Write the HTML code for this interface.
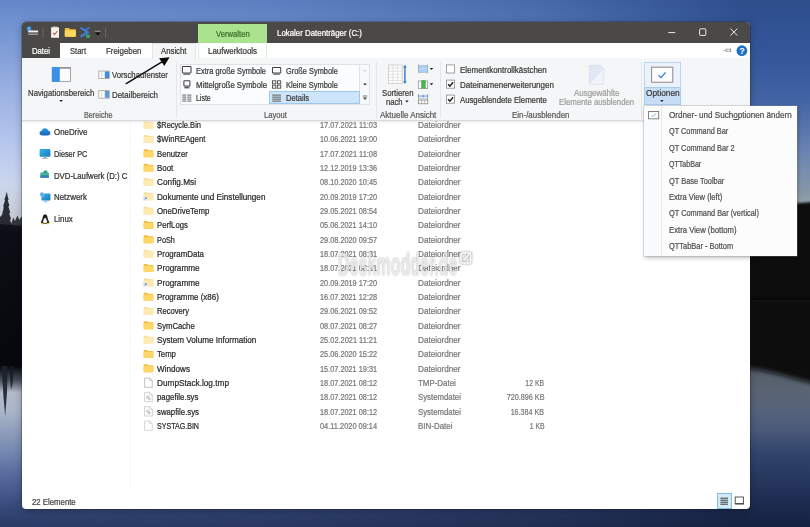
<!DOCTYPE html>
<html lang="de">
<head>
<meta charset="utf-8">
<title>Lokaler Datenträger (C:)</title>
<style>
html,body{margin:0;padding:0;width:810px;height:527px;overflow:hidden;background:#1a2644}
body{position:relative;font-family:"Liberation Sans",sans-serif;font-size:7.8px;color:#2a2a2a;-webkit-font-smoothing:antialiased}
svg{position:absolute;left:0;top:0;display:block}
#bg{width:810px;height:527px}
#ico{width:810px;height:527px;pointer-events:none}
.abs{position:absolute;box-sizing:border-box}
#win{left:22px;top:22px;width:728px;height:487px;background:#fff;border-radius:4px;overflow:hidden;box-shadow:0 0 0 0.6px rgba(30,30,40,.45),0 2px 8px rgba(0,0,0,.28)}
#titlebar{left:0;top:0;width:728px;height:20.8px;background:#4b4947}
#ctx{left:176px;top:2.1px;width:69.4px;height:18.7px;background:#abe28d}
#tabrow{left:0;top:20.8px;width:728px;height:15.5px;background:#fff}
#filetab{left:0;top:20.8px;width:38px;height:15.5px;background:#4b4947}
#viewtab{left:129.5px;top:21.4px;width:44.6px;height:15.4px;background:#f5f6f7;border:0.7px solid #e4e5e7;border-bottom:none}
#ctxtab{left:176px;top:20.8px;width:69.4px;height:15.5px;background:#fdfffc;border-left:0.7px solid #e3e8e0;border-right:0.7px solid #e3e8e0}
#ribbon{left:0;top:36.3px;width:728px;height:63px;background:#f5f6f7;border-bottom:0.8px solid #d9dadc;box-shadow:0 1px 2px rgba(0,0,0,.10)}
.gsep{top:40px;width:0.7px;height:56px;background:#e6e7e9}
#gallery{left:157.6px;top:42.2px;width:180px;height:40.4px;background:#fbfcfd;border:0.7px solid #dfe2e6}
#galscroll{left:337.6px;top:42.2px;width:10px;height:40.4px;background:#f8f9fa;border:0.7px solid #dfe2e6;border-left:none}
#galsel{left:247.2px;top:69.3px;width:90.4px;height:13.2px;background:#cde4fb;border:0.7px solid #9cc7ee}
#optbtn{left:622.4px;top:40.4px;width:37px;height:43px;background:#eaf2fb;border:0.7px solid #bcd6f1}
#optbtn2{left:622.4px;top:64.9px;width:37px;height:18.5px;background:#c7def6;border:0.7px solid #a9cbee}
#navsep{left:107.6px;top:100px;width:0.6px;height:366px;background:#f7f7f8}
#statusview{left:694.7px;top:471.3px;width:15px;height:15.7px;background:#d3e9f5;border:0.8px solid #82c0e0}
#menu{left:644.4px;top:105.6px;width:152.6px;height:150px;background:#fcfcfd;box-shadow:0 0 0 0.6px rgba(140,140,150,.45),1px 2px 4px rgba(0,0,0,.25)}
#menucol{left:0;top:0;width:18px;height:150px;background:#fafbfc;border-right:0.6px solid #ececee}
#wm{left:338.3px;top:246.4px;height:36px;line-height:36px;font-weight:bold;font-size:32px;color:rgba(255,255,255,.74);text-shadow:0 0 1.6px rgba(0,0,0,.3),0 0 3.5px rgba(0,0,0,.13);white-space:nowrap;transform-origin:0 50%;transform:scaleX(0.5015);will-change:transform}
#txt{position:absolute;left:0;top:0;width:810px;height:527px;will-change:transform;transform:translateZ(0)}
#wmi{width:810px;height:527px;pointer-events:none}

.t{position:absolute;white-space:nowrap;line-height:12px;height:12px;font-size:8.15px;transform-origin:0 50%;-webkit-text-stroke:0.22px currentColor}
.t u{text-decoration:underline;text-underline-offset:1px}
</style>
</head>
<body>
<svg id="bg" viewBox="0 0 810 527" width="810" height="527">
<defs>
<linearGradient id="gL" x1="0" y1="0" x2="0" y2="527" gradientUnits="userSpaceOnUse">
<stop offset="0" stop-color="#6387c9"/>
<stop offset="0.042" stop-color="#6f91d0"/>
<stop offset="0.19" stop-color="#a0b5e4"/>
<stop offset="0.285" stop-color="#bac9ee"/>
<stop offset="0.35" stop-color="#cbd6ec"/>
<stop offset="0.385" stop-color="#c9d0df"/>
<stop offset="0.425" stop-color="#c2c6ce"/>
<stop offset="0.437" stop-color="#3a3e46"/>
<stop offset="0.447" stop-color="#0b0e14"/>
<stop offset="0.695" stop-color="#06080d"/>
<stop offset="0.722" stop-color="#4a525e"/>
<stop offset="0.745" stop-color="#b2bbc9"/>
<stop offset="0.78" stop-color="#aab5c8"/>
<stop offset="0.82" stop-color="#8e9dbb"/>
<stop offset="0.86" stop-color="#7286b0"/>
<stop offset="0.90" stop-color="#576c9c"/>
<stop offset="0.94" stop-color="#42568a"/>
<stop offset="0.966" stop-color="#344776"/>
<stop offset="1" stop-color="#2b3b66"/>
</linearGradient>
<linearGradient id="gR" x1="0" y1="0" x2="0" y2="527" gradientUnits="userSpaceOnUse">
<stop offset="0" stop-color="#2d4d8b"/>
<stop offset="0.10" stop-color="#34569a"/>
<stop offset="0.19" stop-color="#4263a4"/>
<stop offset="0.285" stop-color="#6983b3"/>
<stop offset="0.33" stop-color="#798fae"/>
<stop offset="0.36" stop-color="#8395a7"/>
<stop offset="0.39" stop-color="#98a2ab"/>
<stop offset="0.69" stop-color="#515963"/>
<stop offset="0.74" stop-color="#5a6473"/>
<stop offset="0.78" stop-color="#55627a"/>
<stop offset="0.815" stop-color="#4a5a79"/>
<stop offset="0.86" stop-color="#32446b"/>
<stop offset="0.95" stop-color="#1d2c52"/>
<stop offset="1" stop-color="#15213f"/>
</linearGradient>
<linearGradient id="gMask" x1="0" y1="0" x2="810" y2="0" gradientUnits="userSpaceOnUse">
<stop offset="0" stop-color="#fff" stop-opacity="0"/>
<stop offset="0.03" stop-color="#fff" stop-opacity="0"/>
<stop offset="0.33" stop-color="#fff" stop-opacity="0.14"/>
<stop offset="0.66" stop-color="#fff" stop-opacity="0.5"/>
<stop offset="0.92" stop-color="#fff" stop-opacity="1"/>
<stop offset="1" stop-color="#fff" stop-opacity="1"/>
</linearGradient>
<mask id="mR" maskUnits="userSpaceOnUse" x="0" y="0" width="810" height="527"><rect x="0" y="0" width="810" height="527" fill="url(#gMask)"/></mask>
<filter id="fb" x="-5%" y="-5%" width="110%" height="110%"><feGaussianBlur stdDeviation="0.9"/></filter>
<filter id="fb2" x="-5%" y="-20%" width="110%" height="140%"><feGaussianBlur stdDeviation="2.4"/></filter>
</defs>
<rect x="0" y="0" width="810" height="527" fill="url(#gL)"/>
<path d="M6.8 191.6 L7.6 196 L8.6 199.6 L7.8 200.4 L9.4 205.6 L8.4 206.4 L10.2 212.6 L9.2 213.4 L11 219 L10 219.8 L12 226 L12 234 L0 234 L0 217 L2 215 L3.8 207 L3.2 206.2 L5 200.6 L4.4 199.8 L5.8 195.6 Z" fill="#0e1117" opacity="0.86"/>
<path d="M11 224 L13.4 217.4 L15 221 L17.4 215.6 L19.4 220 L21.4 216.6 L24 221 L24 234 L11 234 Z" fill="#10131a" opacity="0.8"/>
<path d="M0 224 L24 226 L24 236 L0 236 Z" fill="#0b0e14" opacity="0.75"/>
<path d="M1.6 366 L7.6 366 L7 392 L5.2 416 L3.4 396 Z" fill="#1c222c" opacity="0.9"/>
<path d="M9 366 L14 366 L12.6 384 L11 390 Z" fill="#161b24" opacity="0.75"/>
<g mask="url(#mR)">
<rect x="0" y="0" width="810" height="527" fill="url(#gR)"/>
<path filter="url(#fb)" d="M380 206 L740 203.6 L797 203.3 L820 201.4 L820 330 L380 330 Z" fill="#080a10"/>
<path filter="url(#fb2)" d="M380 300 L820 300 L820 385 L810 382.6 L796 379 L780 374.6 L765 371 L750 368.6 L380 366 Z" fill="#080a10"/>
</g>
</svg>

<div id="win" class="abs">
<div id="titlebar" class="abs"></div>
<div id="ctx" class="abs"></div>
<div id="tabrow" class="abs"></div>
<div id="filetab" class="abs"></div>
<div id="ctxtab" class="abs"></div>
<div id="ribbon" class="abs"></div>
<div id="viewtab" class="abs"></div>
<div class="abs gsep" style="left:153.6px"></div>
<div class="abs gsep" style="left:354.3px"></div>
<div class="abs gsep" style="left:418.4px"></div>
<div class="abs gsep" style="left:619px"></div>
<div id="gallery" class="abs"></div>
<div id="galscroll" class="abs"></div>
<div id="galsel" class="abs"></div>
<div id="optbtn" class="abs"></div>
<div id="optbtn2" class="abs"></div>
<div id="navsep" class="abs"></div>
<div id="statusview" class="abs"></div>
</div>
<div id="menu" class="abs"><div id="menucol" class="abs"></div></div>

<svg id="ico" viewBox="0 0 810 527" width="810" height="527">
<defs>
<linearGradient id="gMon" x1="0" y1="0" x2="1" y2="1"><stop offset="0" stop-color="#35b4ea"/><stop offset="1" stop-color="#1a78bc"/></linearGradient>
<linearGradient id="gCloud" x1="0" y1="0" x2="0" y2="1"><stop offset="0" stop-color="#2a95e6"/><stop offset="1" stop-color="#1268c0"/></linearGradient>
<g id="folder">
<path d="M0.3 1.6 Q0.3 0.9 1 0.9 L3.9 0.9 L5 2 L9.9 2 Q10.5 2 10.5 2.7 L10.5 9 Q10.5 9.6 9.9 9.6 L0.9 9.6 Q0.3 9.6 0.3 9 Z" fill="#f3bb39"/>
<path d="M0.3 3.4 Q0.3 2.9 0.9 2.9 L9.9 2.9 Q10.5 2.9 10.5 3.4 L10.5 9 Q10.5 9.6 9.9 9.6 L0.9 9.6 Q0.3 9.6 0.3 9 Z" fill="#ffd766"/>
</g>
<g id="i-f"><use href="#folder"/></g>
<g id="i-ff" opacity="0.5"><use href="#folder"/></g>
<g id="i-fs"><g opacity="0.5"><use href="#folder"/></g><rect x="0" y="6.2" width="3.6" height="3.6" fill="#fff" stroke="#c9d3e6" stroke-width="0.4"/><path d="M0.9 9 L2.8 7.1 M1.5 7 L2.9 7 L2.9 8.4" stroke="#2f66c8" stroke-width="0.8" fill="none"/></g>
<g id="page"><path d="M1.2 0.2 L6.6 0.2 L9.4 3 L9.4 10.6 L1.2 10.6 Z" fill="#fdfdfd" stroke="#a9a9a9" stroke-width="0.7"/><path d="M6.6 0.2 L6.6 3 L9.4 3" fill="none" stroke="#a9a9a9" stroke-width="0.6"/></g>
<g id="i-p"><use href="#page"/></g>
<g id="i-pf" opacity="0.7"><use href="#page"/></g>
<g id="i-s" opacity="0.75"><use href="#page"/><circle cx="4.6" cy="5.4" r="1.4" fill="#d9d9d9" stroke="#9a9a9a" stroke-width="0.7"/><circle cx="6.3" cy="7.5" r="1.1" fill="#d9d9d9" stroke="#9a9a9a" stroke-width="0.6"/></g>
<path id="dd" d="M-1.8 -1 L1.8 -1 L0 1 Z" fill="#222"/>
<g id="cb"><rect x="0.4" y="0.4" width="8.1" height="8.1" fill="#fff" stroke="#8c8c8c" stroke-width="0.8"/></g>
<g id="cbc"><use href="#cb"/><path d="M2 4.6 L3.8 6.4 L7 2.6" fill="none" stroke="#1c1c1c" stroke-width="1.4"/></g>
<g id="mon"><rect x="0.5" y="0.5" width="8.6" height="6.4" rx="0.6" fill="#fdfdfd" stroke="#404040" stroke-width="1.05"/><rect x="1.4" y="7.5" width="6.8" height="1.3" fill="#5a5a5a"/></g>
<g id="monS"><rect x="0.5" y="0.5" width="6" height="5.2" rx="0.5" fill="#fdfdfd" stroke="#404040" stroke-width="1.05"/><rect x="1" y="6.5" width="5" height="1.7" fill="#5a5a5a"/></g>
</defs>

<!-- file list icons -->
<clipPath id="cpRows"><rect x="130" y="121.6" width="40" height="320"/></clipPath>
<g clip-path="url(#cpRows)">
<use href="#i-ff" transform="translate(143.4,119.90) scale(0.95,0.9)"/>
<use href="#i-ff" transform="translate(143.4,134.23) scale(0.95,0.9)"/>
<use href="#i-f" transform="translate(143.4,148.56) scale(0.95,0.9)"/>
<use href="#i-f" transform="translate(143.4,162.89) scale(0.95,0.9)"/>
<use href="#i-ff" transform="translate(143.4,177.22) scale(0.95,0.9)"/>
<use href="#i-fs" transform="translate(143.4,191.55) scale(0.95,0.9)"/>
<use href="#i-ff" transform="translate(143.4,205.88) scale(0.95,0.9)"/>
<use href="#i-f" transform="translate(143.4,220.21) scale(0.95,0.9)"/>
<use href="#i-f" transform="translate(143.4,234.54) scale(0.95,0.9)"/>
<use href="#i-ff" transform="translate(143.4,248.87) scale(0.95,0.9)"/>
<use href="#i-f" transform="translate(143.4,263.20) scale(0.95,0.9)"/>
<use href="#i-fs" transform="translate(143.4,277.53) scale(0.95,0.9)"/>
<use href="#i-f" transform="translate(143.4,291.86) scale(0.95,0.9)"/>
<use href="#i-ff" transform="translate(143.4,306.19) scale(0.95,0.9)"/>
<use href="#i-f" transform="translate(143.4,320.52) scale(0.95,0.9)"/>
<use href="#i-ff" transform="translate(143.4,334.85) scale(0.95,0.9)"/>
<use href="#i-f" transform="translate(143.4,349.18) scale(0.95,0.9)"/>
<use href="#i-f" transform="translate(143.4,363.51) scale(0.95,0.9)"/>
<use href="#i-p" transform="translate(143.4,377.84) scale(0.95,0.9)"/>
<use href="#i-s" transform="translate(143.4,392.17) scale(0.95,0.9)"/>
<use href="#i-s" transform="translate(143.4,406.50) scale(0.95,0.9)"/>
<use href="#i-pf" transform="translate(143.4,420.83) scale(0.95,0.9)"/>
</g>

<!-- quick access toolbar -->
<g>
<rect x="27" y="26.6" width="4.2" height="4.4" fill="#2f8ad8"/>
<rect x="28.3" y="27.4" width="1.4" height="1.6" fill="#9fd0f5"/>
<rect x="28.2" y="30.5" width="9.9" height="1.9" fill="#f2f2f2"/>
<rect x="28.2" y="33.7" width="9.9" height="1" fill="#bdbcbb"/>
<rect x="42.6" y="27.6" width="0.8" height="9.8" fill="#716f6d"/>
<rect x="51.1" y="27.2" width="7.9" height="10.6" rx="0.6" fill="#f6f2ec"/>
<rect x="52.6" y="26.6" width="4.8" height="1.6" fill="#dcd6cd"/>
<path d="M53 32.8 L54.6 34.6 L57.4 31" fill="none" stroke="#c45a4c" stroke-width="1.1"/>
<path d="M64.8 29 Q64.8 28.1 65.6 28.1 L69 28.1 L70.1 29.3 L75.2 29.3 Q75.9 29.3 75.9 30 L75.9 36 Q75.9 36.7 75.2 36.7 L65.5 36.7 Q64.8 36.7 64.8 36 Z" fill="#f0bf3a"/>
<path d="M64.8 30.6 L75.9 30.6 L75.9 36 Q75.9 36.7 75.2 36.7 L65.5 36.7 Q64.8 36.7 64.8 36 Z" fill="#fbd75c"/>
<path d="M80.6 27.6 L87.6 32.2 L80.6 36.6" fill="none" stroke="#3f7fdb" stroke-width="2.2"/>
<path d="M84 30.4 L89.6 27.6" fill="none" stroke="#3f7fdb" stroke-width="1.6"/>
<rect x="86" y="34.2" width="4" height="3.8" rx="0.8" fill="#3c9c6e"/>
<rect x="95" y="30.8" width="5.6" height="0.8" fill="#b4b3b2"/>
<path d="M95.2 32.6 L100.4 32.6 L97.8 35.6 Z" fill="#0c0c0c"/>
<rect x="105.3" y="27.6" width="0.8" height="9.8" fill="#716f6d"/>
</g>

<!-- window controls -->
<g stroke="#f4f4f4" fill="none" stroke-width="0.95">
<path d="M668.2 32.6 L675.2 32.6"/>
<rect x="699.6" y="28.8" width="6.2" height="6.6" rx="0.8"/>
<path d="M730.4 28.6 L737.4 35.6 M737.4 28.6 L730.4 35.6"/>
</g>

<!-- pin + help -->
<g>
<path d="M723.4 50.3 L726 50.3 M726.2 48.6 L726.2 52 M726.2 49.2 L730.4 49.2 L730.4 51.4 L726.2 51.4 M730.6 48.3 L730.6 52.3" stroke="#8a8a8a" stroke-width="0.7" fill="none"/>
<circle cx="741.9" cy="50.7" r="5.4" fill="#1a6fc6"/>
<text x="741.9" y="54" text-anchor="middle" font-family="Liberation Sans, sans-serif" font-weight="bold" font-size="9" fill="#fff">?</text>
</g>

<!-- ribbon: panes -->
<g>
<rect x="52.3" y="67.6" width="18.2" height="13.8" fill="#fbfbfb" stroke="#9a9a9a" stroke-width="0.9"/>
<rect x="52.3" y="67.2" width="18.2" height="1.5" fill="#8f8f8f"/>
<rect x="51.9" y="67.2" width="7.9" height="14.6" fill="#3a90e4"/>
<use href="#dd" x="61.1" y="101.1"/>
<rect x="98.8" y="71.1" width="10.4" height="7.4" fill="#fff" stroke="#a8a096" stroke-width="0.8"/>
<rect x="104.8" y="71.5" width="4.4" height="6.6" fill="#3f8edc"/>
<rect x="101.6" y="71.5" width="0.7" height="6.6" fill="#c8c2ba"/>
<rect x="98.8" y="90.6" width="10.4" height="7.6" fill="#fff" stroke="#a8a096" stroke-width="0.8"/>
<rect x="104.8" y="91" width="4.4" height="6.8" fill="#5b9bd8"/>
<rect x="101.6" y="91" width="0.7" height="6.8" fill="#c8c2ba"/>
</g>

<!-- gallery icons -->
<g>
<use href="#mon" x="181.9" y="66"/>
<use href="#monS" x="183.4" y="80.2"/>
<g fill="#7c7c7c">
<rect x="182.2" y="94.5" width="4.1" height="1.2"/><rect x="182.2" y="96.5" width="4.1" height="1.2"/><rect x="182.2" y="98.5" width="4.1" height="1.2"/><rect x="182.2" y="100.5" width="4.1" height="1.2"/>
<rect x="187.3" y="94.5" width="4.1" height="1.2"/><rect x="187.3" y="96.5" width="4.1" height="1.2"/><rect x="187.3" y="98.5" width="4.1" height="1.2"/><rect x="187.3" y="100.5" width="4.1" height="1.2"/>
</g>
<g transform="translate(272,67) scale(0.96,0.88)"><use href="#mon"/></g>
<g fill="#fdfdfd" stroke="#4a4a4a" stroke-width="0.9">
<rect x="272.5" y="80.8" width="3.3" height="3"/><rect x="277.4" y="80.8" width="3.3" height="3"/>
<rect x="272.5" y="85.2" width="3.3" height="3"/><rect x="277.4" y="85.2" width="3.3" height="3"/>
</g>
<g fill="#7c7c7c">
<rect x="272.2" y="94.5" width="8.8" height="1.3"/><rect x="272.2" y="96.5" width="8.8" height="1.3"/><rect x="272.2" y="98.5" width="8.8" height="1.3"/><rect x="272.2" y="100.5" width="8.8" height="1.3"/>
</g>
<rect x="363.6" y="70.4" width="2.6" height="0.8" fill="#b5b5b5"/>
<use href="#dd" x="365" y="84.6"/>
<rect x="362.8" y="95.6" width="4.4" height="0.8" fill="#555"/>
<path d="M362.8 97.4 L367.2 97.4 L365 100 Z" fill="#555"/>
</g>

<!-- current view -->
<g>
<rect x="388.4" y="65" width="13.8" height="18.6" fill="#fefefe" stroke="#c4c4c4" stroke-width="0.7"/>
<path d="M388.4 68.1 H402.2 M388.4 71.2 H402.2 M388.4 74.3 H402.2 M388.4 77.4 H402.2 M388.4 80.5 H402.2 M393 65 V83.6 M397.6 65 V83.6" stroke="#d2d2d2" stroke-width="0.6" fill="none"/>
<path d="M404.9 66.5 V82.2" stroke="#3b82c8" stroke-width="1.5" fill="none"/>
<path d="M403 67.4 L404.9 64.8 L406.8 67.4 Z M403 81.2 L404.9 83.9 L406.8 81.2 Z" fill="#3b82c8"/>
<use href="#dd" x="406.9" y="101.4"/>
<rect x="418.6" y="65.4" width="9" height="7" fill="#a9d1f2" stroke="#9db6cc" stroke-width="0.6"/>
<path d="M418.6 64.4 V73.4 M427.6 64.4 V73.4" stroke="#9aa4ae" stroke-width="0.7"/>
<path d="M418.6 68.9 H427.6" stroke="#d4e8f8" stroke-width="0.6"/>
<use href="#dd" x="431.5" y="69"/>
<rect x="418.3" y="81" width="9.4" height="7.4" fill="#fff" stroke="#8c8c8c" stroke-width="0.7"/>
<rect x="421.6" y="80" width="3.8" height="8.4" fill="#3ec046"/>
<path d="M421.4 81 V88.4 M425.6 81 V88.4" stroke="#6a6a6a" stroke-width="0.5"/>
<use href="#dd" x="431.5" y="84.3"/>
<path d="M418.6 94.2 V98 M427.6 94.2 V98 M419.4 96.1 H426.8" stroke="#3b82c8" stroke-width="0.8" fill="none"/>
<path d="M423.1 94.6 V97.6" stroke="#3b82c8" stroke-width="0.7"/>
<rect x="418.4" y="99" width="9.4" height="4.8" fill="#fff" stroke="#7e7e7e" stroke-width="0.7"/>
<path d="M418.4 100.6 H427.8 M421.5 100.6 V103.8 M424.6 100.6 V103.8" stroke="#8e8e8e" stroke-width="0.6"/>
</g>

<!-- checkboxes -->
<use href="#cb" x="446.1" y="64.5"/>
<use href="#cbc" x="446.1" y="79.7"/>
<use href="#cbc" x="446.1" y="94.7"/>

<!-- hide selected -->
<g>
<path d="M589.4 65.3 L600.6 65.3 L603.9 68.6 L603.9 84.3 L589.4 84.3 Z" fill="#e1e7f5"/>
<path d="M589.4 84.3 L603.9 69 L603.9 84.3 Z" fill="#f0f3fa"/>
<path d="M589.4 65.3 L600.6 65.3 L603.9 68.6 L603.9 84.3 L589.4 84.3 Z" fill="none" stroke="#c3cbe0" stroke-width="0.6" stroke-dasharray="1.2 1"/>
</g>

<!-- options -->
<g>
<rect x="651.6" y="67.2" width="21.2" height="15" fill="#fdfdfd" stroke="#90877f" stroke-width="1"/>
<path d="M658.6 75.2 L661 77.6 L665.6 72.4" fill="none" stroke="#2f7fcc" stroke-width="1.3"/>
<use href="#dd" x="661.9" y="101.1"/>
<rect x="648.5" y="111.5" width="10.2" height="7.3" fill="#fdfdfd" stroke="#777" stroke-width="0.9"/>
<path d="M651.6 115.2 L653 116.6 L655.8 113.6" fill="none" stroke="#6fa8dc" stroke-width="0.9"/>
</g>

<!-- nav pane icons -->
<g>
<path d="M42.3 135.4 Q39.5 135.4 39.5 133 Q39.5 131 41.6 130.7 Q42.4 128.3 45 128.3 Q47.3 128.3 48.2 130.5 Q50.4 130.8 50.4 133 Q50.4 135.4 48 135.4 Z" fill="url(#gCloud)"/>
<rect x="39.6" y="149.1" width="10.8" height="7.6" rx="0.8" fill="url(#gMon)"/>
<rect x="44" y="156.7" width="2" height="1.4" fill="#8fa7b8"/>
<rect x="42.2" y="158" width="5.6" height="0.8" fill="#9db0be"/>
<path d="M40.4 173 Q40.4 172.4 41 172.4 L43 172.4 L44.4 170.4 L47 170.4 L47.6 172.4 L48.2 172.4 Q48.8 172.4 48.8 173 L48.8 177.8 L40.4 177.8 Z" fill="#33a08b"/>
<rect x="40.4" y="175.5" width="8.4" height="2.3" fill="#3b7fc6"/>
<rect x="41.6" y="173.6" width="6" height="0.8" fill="#7fd0b8"/>
<rect x="41.4" y="193.6" width="9" height="6.9" rx="0.7" fill="url(#gMon)"/>
<rect x="40.2" y="192.6" width="3.4" height="3.6" rx="0.5" fill="#3f9fe4" stroke="#d6ecfa" stroke-width="0.5"/>
<rect x="44.8" y="200.5" width="2" height="1.2" fill="#6fb3e2"/>
<rect x="43.4" y="201.6" width="4.8" height="0.7" fill="#8fc4ea"/>
<path d="M45.1 214.2 Q47.2 214.2 47.4 216.8 Q47.6 219 49 221.4 Q49.9 223.2 48.4 223.8 L41.8 223.8 Q40.3 223.2 41.2 221.4 Q42.6 219 42.8 216.8 Q43 214.2 45.1 214.2 Z" fill="#1d1d1d"/>
<path d="M45.1 217.6 Q46.6 219 47.2 221.4 Q47.4 223.2 45.1 223.2 Q42.8 223.2 43 221.4 Q43.6 219 45.1 217.6 Z" fill="#f6f6f2"/>
<path d="M41 223 Q42.4 222.2 43.6 223.2 L43.4 224.2 L41 224.2 Z M49.2 223 Q47.8 222.2 46.6 223.2 L46.8 224.2 L49.2 224.2 Z" fill="#e6c22e"/>
</g>

<!-- status bar view buttons -->
<g>
<path d="M720.4 498.2 H728 M720.4 500.2 H728 M720.4 502.2 H728 M720.4 504.2 H728" stroke="#2c2c2c" stroke-width="0.9"/>
<rect x="735.2" y="497" width="8.2" height="6.8" fill="#fff" stroke="#444" stroke-width="0.9"/>
<rect x="735.2" y="503.2" width="8.6" height="1.2" fill="#444"/>
</g>

<!-- annotation arrow -->
<g>
<path d="M126.2 83.6 L163.2 61.2" stroke="#0a0a0a" stroke-width="1.4" stroke-linecap="round"/>
<path d="M169.6 57.3 L159.1 58.2 L164.3 66 Z" fill="#0a0a0a"/>
</g>
</svg>

<div id="txt">
<span class="t" style="top:28.30px;color:#ffffff;left:276.60px;transform:scaleX(0.9691);">Lokaler Datenträger (C:)</span>
<span class="t" style="top:29.30px;color:#3c6e2c;left:215.60px;transform:scaleX(0.9443);">Verwalten</span>
<span class="t" style="top:46.40px;color:#ffffff;left:31.60px;transform:scaleX(0.9489);">Datei</span>
<span class="t" style="top:46.40px;color:#3a3a3a;left:69.60px;transform:scaleX(0.9318);">Start</span>
<span class="t" style="top:46.40px;color:#3a3a3a;left:105.60px;transform:scaleX(0.9701);">Freigeben</span>
<span class="t" style="top:46.40px;color:#3a3a3a;left:160.80px;transform:scaleX(0.9566);">Ansicht</span>
<span class="t" style="top:46.40px;color:#3a3a3a;left:207.90px;transform:scaleX(0.9792);">Laufwerktools</span>
<span class="t" style="top:88.10px;color:#3a3a3a;left:27.70px;transform:scaleX(0.9593);">Navigationsbereich</span>
<span class="t" style="top:70.40px;color:#3a3a3a;left:111.90px;transform:scaleX(0.9520);">Vorschaufenster</span>
<span class="t" style="top:90.00px;color:#3a3a3a;left:111.90px;transform:scaleX(0.9700);">Detailbereich</span>
<span class="t" style="top:110.30px;color:#5a5a5a;left:84.00px;transform:scaleX(0.8916);">Bereiche</span>
<span class="t" style="top:65.90px;color:#3a3a3a;left:196.00px;transform:scaleX(0.9171);">Extra große Symbole</span>
<span class="t" style="top:79.60px;color:#3a3a3a;left:196.00px;transform:scaleX(0.9528);">Mittelgroße Symbole</span>
<span class="t" style="top:93.30px;color:#3a3a3a;left:196.00px;transform:scaleX(0.8561);">Liste</span>
<span class="t" style="top:65.90px;color:#3a3a3a;left:285.50px;transform:scaleX(0.9103);">Große Symbole</span>
<span class="t" style="top:79.60px;color:#3a3a3a;left:285.50px;transform:scaleX(0.9173);">Kleine Symbole</span>
<span class="t" style="top:93.30px;color:#3a3a3a;left:285.50px;transform:scaleX(0.9298);">Details</span>
<span class="t" style="top:110.30px;color:#5a5a5a;left:263.70px;transform:scaleX(0.9424);">Layout</span>
<span class="t" style="top:88.30px;color:#3a3a3a;left:381.50px;transform:scaleX(0.9555);">Sortieren</span>
<span class="t" style="top:96.70px;color:#3a3a3a;left:386.40px;transform:scaleX(0.9418);">nach</span>
<span class="t" style="top:110.30px;color:#5a5a5a;left:380.00px;transform:scaleX(0.9815);">Aktuelle Ansicht</span>
<span class="t" style="top:64.70px;color:#3a3a3a;left:459.60px;transform:scaleX(0.9793);">Elementkontrollkästchen</span>
<span class="t" style="top:79.90px;color:#3a3a3a;left:459.60px;transform:scaleX(0.9852);">Dateinamenerweiterungen</span>
<span class="t" style="top:94.70px;color:#3a3a3a;left:459.60px;transform:scaleX(0.9549);">Ausgeblendete Elemente</span>
<span class="t" style="top:110.30px;color:#5a5a5a;left:511.50px;transform:scaleX(0.9790);">Ein-/ausblenden</span>
<span class="t" style="top:88.10px;color:#9d9d9d;left:574.00px;transform:scaleX(0.9735);">Ausgewählte</span>
<span class="t" style="top:96.70px;color:#9d9d9d;left:558.90px;transform:scaleX(0.9554);">Elemente ausblenden</span>
<span class="t" style="top:88.10px;color:#3a3a3a;left:645.60px;transform:scaleX(1.0217);">Optionen</span>
<span class="t" style="top:110.10px;color:#505050;left:668.80px;transform:scaleX(0.9949);">Ordner- und Such<u>o</u>ptionen ändern</span>
<span class="t" style="top:126.48px;color:#505050;left:668.80px;transform:scaleX(0.9000);">QT Command Bar</span>
<span class="t" style="top:142.86px;color:#505050;left:668.80px;transform:scaleX(0.9040);">QT Command Bar 2</span>
<span class="t" style="top:159.24px;color:#505050;left:668.80px;transform:scaleX(0.8695);">QTTabBar</span>
<span class="t" style="top:175.62px;color:#505050;left:668.80px;transform:scaleX(0.9115);">QT Base Toolbar</span>
<span class="t" style="top:192.00px;color:#505050;left:668.80px;transform:scaleX(0.9318);">Extra View (left)</span>
<span class="t" style="top:208.38px;color:#505050;left:668.80px;transform:scaleX(0.9064);">QT Command Bar (vertical)</span>
<span class="t" style="top:224.76px;color:#505050;left:668.80px;transform:scaleX(0.9494);">Extra View (bottom)</span>
<span class="t" style="top:241.14px;color:#505050;left:668.80px;transform:scaleX(0.9171);">QTTabBar - Bottom</span>
<span class="t" style="top:127.30px;color:#333333;left:54.10px;transform:scaleX(0.9701);">OneDrive</span>
<span class="t" style="top:148.60px;color:#333333;left:54.10px;transform:scaleX(0.8992);">Dieser PC</span>
<span class="t" style="top:170.60px;color:#333333;left:54.10px;transform:scaleX(0.9550);">DVD-Laufwerk (D:) C</span>
<span class="t" style="top:192.10px;color:#333333;left:54.10px;transform:scaleX(0.9712);">Netzwerk</span>
<span class="t" style="top:214.10px;color:#333333;left:54.10px;transform:scaleX(0.9672);">Linux</span>
<span class="t" style="top:120.10px;color:#2a2a2a;left:157.00px;transform:scaleX(0.9278);">$Recycle.Bin</span>
<span class="t" style="top:120.10px;color:#787878;left:320.00px;transform:scaleX(0.9113);">17.07.2021 11:03</span>
<span class="t" style="top:120.10px;color:#787878;left:417.80px;transform:scaleX(1.0031);">Dateiordner</span>
<span class="t" style="top:134.43px;color:#2a2a2a;left:157.00px;transform:scaleX(0.9465);">$WinREAgent</span>
<span class="t" style="top:134.43px;color:#787878;left:320.00px;transform:scaleX(0.9025);">10.06.2021 19:00</span>
<span class="t" style="top:134.43px;color:#787878;left:417.80px;transform:scaleX(1.0031);">Dateiordner</span>
<span class="t" style="top:148.76px;color:#2a2a2a;left:157.00px;transform:scaleX(0.9468);">Benutzer</span>
<span class="t" style="top:148.76px;color:#787878;left:320.00px;transform:scaleX(0.9113);">17.07.2021 11:08</span>
<span class="t" style="top:148.76px;color:#787878;left:417.80px;transform:scaleX(1.0031);">Dateiordner</span>
<span class="t" style="top:163.09px;color:#2a2a2a;left:157.00px;transform:scaleX(0.9750);">Boot</span>
<span class="t" style="top:163.09px;color:#787878;left:320.00px;transform:scaleX(0.9025);">12.12.2019 13:36</span>
<span class="t" style="top:163.09px;color:#787878;left:417.80px;transform:scaleX(1.0031);">Dateiordner</span>
<span class="t" style="top:177.42px;color:#2a2a2a;left:157.00px;transform:scaleX(1.0159);">Config.Msi</span>
<span class="t" style="top:177.42px;color:#787878;left:320.00px;transform:scaleX(0.9025);">08.10.2020 10:45</span>
<span class="t" style="top:177.42px;color:#787878;left:417.80px;transform:scaleX(1.0031);">Dateiordner</span>
<span class="t" style="top:191.75px;color:#2a2a2a;left:157.00px;">Dokumente und Einstellungen</span>
<span class="t" style="top:191.75px;color:#787878;left:320.00px;transform:scaleX(0.9025);">20.09.2019 17:20</span>
<span class="t" style="top:191.75px;color:#787878;left:417.80px;transform:scaleX(1.0031);">Dateiordner</span>
<span class="t" style="top:206.08px;color:#2a2a2a;left:157.00px;transform:scaleX(0.9652);">OneDriveTemp</span>
<span class="t" style="top:206.08px;color:#787878;left:320.00px;transform:scaleX(0.9025);">29.05.2021 08:54</span>
<span class="t" style="top:206.08px;color:#787878;left:417.80px;transform:scaleX(1.0031);">Dateiordner</span>
<span class="t" style="top:220.41px;color:#2a2a2a;left:157.00px;transform:scaleX(0.9468);">PerfLogs</span>
<span class="t" style="top:220.41px;color:#787878;left:320.00px;transform:scaleX(0.9025);">05.06.2021 14:10</span>
<span class="t" style="top:220.41px;color:#787878;left:417.80px;transform:scaleX(1.0031);">Dateiordner</span>
<span class="t" style="top:234.74px;color:#2a2a2a;left:157.00px;transform:scaleX(0.8999);">PoSh</span>
<span class="t" style="top:234.74px;color:#787878;left:320.00px;transform:scaleX(0.9025);">29.08.2020 09:57</span>
<span class="t" style="top:234.74px;color:#787878;left:417.80px;transform:scaleX(1.0031);">Dateiordner</span>
<span class="t" style="top:249.07px;color:#2a2a2a;left:157.00px;transform:scaleX(0.9725);">ProgramData</span>
<span class="t" style="top:249.07px;color:#787878;left:320.00px;transform:scaleX(0.9025);">18.07.2021 08:31</span>
<span class="t" style="top:249.07px;color:#787878;left:417.80px;transform:scaleX(1.0031);">Dateiordner</span>
<span class="t" style="top:263.40px;color:#2a2a2a;left:157.00px;">Programme</span>
<span class="t" style="top:263.40px;color:#787878;left:320.00px;transform:scaleX(0.9025);">18.07.2021 08:31</span>
<span class="t" style="top:263.40px;color:#787878;left:417.80px;transform:scaleX(1.0031);">Dateiordner</span>
<span class="t" style="top:277.73px;color:#2a2a2a;left:157.00px;">Programme</span>
<span class="t" style="top:277.73px;color:#787878;left:320.00px;transform:scaleX(0.9025);">20.09.2019 17:20</span>
<span class="t" style="top:277.73px;color:#787878;left:417.80px;transform:scaleX(1.0031);">Dateiordner</span>
<span class="t" style="top:292.06px;color:#2a2a2a;left:157.00px;transform:scaleX(0.9776);">Programme (x86)</span>
<span class="t" style="top:292.06px;color:#787878;left:320.00px;transform:scaleX(0.9025);">16.07.2021 12:28</span>
<span class="t" style="top:292.06px;color:#787878;left:417.80px;transform:scaleX(1.0031);">Dateiordner</span>
<span class="t" style="top:306.39px;color:#2a2a2a;left:157.00px;transform:scaleX(0.9351);">Recovery</span>
<span class="t" style="top:306.39px;color:#787878;left:320.00px;transform:scaleX(0.9025);">29.06.2021 09:52</span>
<span class="t" style="top:306.39px;color:#787878;left:417.80px;transform:scaleX(1.0031);">Dateiordner</span>
<span class="t" style="top:320.72px;color:#2a2a2a;left:157.00px;transform:scaleX(0.9484);">SymCache</span>
<span class="t" style="top:320.72px;color:#787878;left:320.00px;transform:scaleX(0.9025);">08.07.2021 08:27</span>
<span class="t" style="top:320.72px;color:#787878;left:417.80px;transform:scaleX(1.0031);">Dateiordner</span>
<span class="t" style="top:335.05px;color:#2a2a2a;left:157.00px;">System Volume Information</span>
<span class="t" style="top:335.05px;color:#787878;left:320.00px;transform:scaleX(0.9113);">25.02.2021 11:21</span>
<span class="t" style="top:335.05px;color:#787878;left:417.80px;transform:scaleX(1.0031);">Dateiordner</span>
<span class="t" style="top:349.38px;color:#2a2a2a;left:157.00px;transform:scaleX(0.9509);">Temp</span>
<span class="t" style="top:349.38px;color:#787878;left:320.00px;transform:scaleX(0.9025);">25.06.2020 15:22</span>
<span class="t" style="top:349.38px;color:#787878;left:417.80px;transform:scaleX(1.0031);">Dateiordner</span>
<span class="t" style="top:363.71px;color:#2a2a2a;left:157.00px;">Windows</span>
<span class="t" style="top:363.71px;color:#787878;left:320.00px;transform:scaleX(0.9025);">15.07.2021 19:31</span>
<span class="t" style="top:363.71px;color:#787878;left:417.80px;transform:scaleX(1.0031);">Dateiordner</span>
<span class="t" style="top:378.04px;color:#2a2a2a;left:157.00px;transform:scaleX(1.0154);">DumpStack.log.tmp</span>
<span class="t" style="top:378.04px;color:#787878;left:320.00px;transform:scaleX(0.9025);">18.07.2021 08:12</span>
<span class="t" style="top:378.04px;color:#787878;left:417.80px;transform:scaleX(0.9735);">TMP-Datei</span>
<span class="t" style="top:378.04px;color:#787878;right:265.60px;transform:scaleX(0.8491);transform-origin:100% 50%;">12 KB</span>
<span class="t" style="top:392.37px;color:#2a2a2a;left:157.00px;transform:scaleX(0.9649);">pagefile.sys</span>
<span class="t" style="top:392.37px;color:#787878;left:320.00px;transform:scaleX(0.9025);">18.07.2021 08:12</span>
<span class="t" style="top:392.37px;color:#787878;left:417.80px;transform:scaleX(0.9593);">Systemdatei</span>
<span class="t" style="top:392.37px;color:#787878;right:265.60px;transform:scaleX(0.8877);transform-origin:100% 50%;">720.896 KB</span>
<span class="t" style="top:406.70px;color:#2a2a2a;left:157.00px;transform:scaleX(0.9586);">swapfile.sys</span>
<span class="t" style="top:406.70px;color:#787878;left:320.00px;transform:scaleX(0.9025);">18.07.2021 08:12</span>
<span class="t" style="top:406.70px;color:#787878;left:417.80px;transform:scaleX(0.9593);">Systemdatei</span>
<span class="t" style="top:406.70px;color:#787878;right:265.60px;transform:scaleX(0.8774);transform-origin:100% 50%;">16.384 KB</span>
<span class="t" style="top:421.03px;color:#2a2a2a;left:157.00px;transform:scaleX(0.8719);">SYSTAG.BIN</span>
<span class="t" style="top:421.03px;color:#787878;left:320.00px;transform:scaleX(0.9113);">04.11.2020 09:14</span>
<span class="t" style="top:421.03px;color:#787878;left:417.80px;transform:scaleX(0.9796);">BIN-Datei</span>
<span class="t" style="top:421.03px;color:#787878;right:265.60px;transform:scaleX(0.8397);transform-origin:100% 50%;">1 KB</span>
<span class="t" style="top:497.00px;color:#444444;left:31.60px;transform:scaleX(0.9578);">22 Elemente</span>
</div>
<div id="wm" class="abs">Deskmodder.de</div>
<svg id="wmi" viewBox="0 0 810 527" width="810" height="527">
<defs><filter id="wms" x="-30%" y="-30%" width="160%" height="160%"><feGaussianBlur stdDeviation="0.9"/></filter></defs>
<g fill="none" stroke="#000" stroke-opacity="0.3" stroke-width="2.6" filter="url(#wms)"><rect x="461" y="253" width="9.6" height="10" rx="1.4"/><path d="M463.4 260.6 L470.6 252.6"/></g>
<g fill="none" stroke="#fff" stroke-opacity="0.92" stroke-width="1.5"><rect x="461" y="253" width="9.6" height="10" rx="1.4"/><path d="M463.4 260.6 L470.6 252.6"/></g>
</svg>
</body>
</html>
